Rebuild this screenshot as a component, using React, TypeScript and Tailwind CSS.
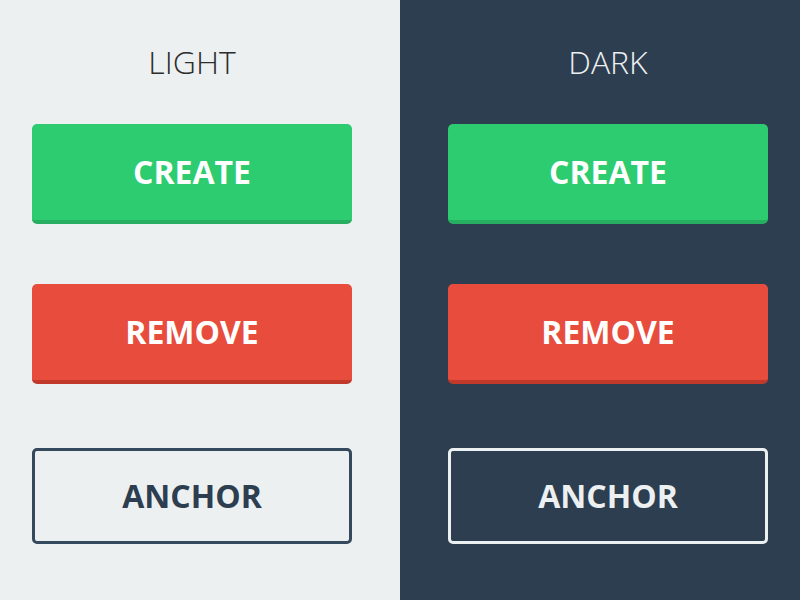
const font = { fontFamily: '"Open Sans", "Liberation Sans", sans-serif' }

function Panel({ title, dark }: { title: string; dark: boolean }) {
  return (
    <div className={`flex flex-col w-1/2 h-full ${dark ? 'bg-[#2c3e50] pl-12 pr-8' : 'bg-[#ecf0f1] pl-8 pr-12'}`}>
      <div className="flex h-[124px] items-center justify-center">
        <p className={`text-[32px] font-light ${dark ? 'text-[#ecf0f1]' : 'text-[#2d2d2d]'}`}>{title}</p>
      </div>
      <button className="flex h-[100px] w-full items-center justify-center rounded-[5px] bg-[#2ecc71] border-b-4 border-[#27ae60] text-[32px] font-bold text-white">
        CREATE
      </button>
      <button className="mt-[60px] flex h-[100px] w-full items-center justify-center rounded-[5px] bg-[#e74c3c] border-b-4 border-[#c0392b] text-[32px] font-bold text-white">
        REMOVE
      </button>
      <button
        className={`mt-[64px] flex h-[96px] w-full items-center justify-center rounded-[5px] border-[3px] text-[32px] font-bold ${
          dark ? 'border-[#ecf0f1] text-[#ecf0f1]' : 'border-[#34495e] text-[#2c3e50]'
        }`}
      >
        ANCHOR
      </button>
    </div>
  )
}

export default function App() {
  return (
    <div className="flex w-[800px] h-[600px]" style={font}>
      <Panel title="LIGHT" dark={false} />
      <Panel title="DARK" dark={true} />
    </div>
  )
}
